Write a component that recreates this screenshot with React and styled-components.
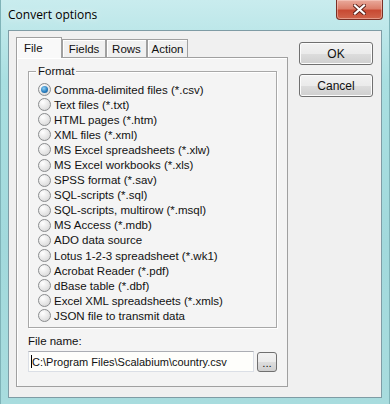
import React from 'react';
import styled, { createGlobalStyle } from 'styled-components';

const GlobalStyle = createGlobalStyle`
  html, body {
    margin: 0;
    padding: 0;
    background: #a3dadc;
  }
  body {
    font-family: "Liberation Sans", Arial, sans-serif;
    font-size: 11.5px;
    color: #111;
  }
  * {
    box-sizing: border-box;
  }
`;

const Window = styled.div`
  width: 390px;
  height: 404px;
  display: flex;
  flex-direction: column;
  padding: 0 8px 6px 8px;
  background: linear-gradient(180deg, #c9ecee 0%, #a9dfe1 20%, #a2d9dc 60%, #a8dcde 100%);
  box-shadow: inset 1px 0 0 #7fb3b8, inset -1px 0 0 #7fb3b8;
`;

const TitleBar = styled.div`
  height: 30px;
  display: flex;
  justify-content: space-between;
  align-items: flex-start;
`;

const Title = styled.span`
  font-family: "Open Sans", "Noto Sans", sans-serif;
  font-size: 12px;
  line-height: 16px;
  padding-top: 7px;
  color: #000;
  text-shadow: 0 0 6px rgba(255, 255, 255, 0.9);
`;

const CloseButton = styled.div`
  width: 47px;
  height: 20px;
  margin-right: -1px;
  display: flex;
  align-items: center;
  justify-content: center;
  border: 1px solid #7a3025;
  border-top: none;
  border-radius: 0 0 4px 4px;
  background: linear-gradient(180deg, #e9aa9c 0%, #dc7f6b 45%, #c84a33 55%, #d0654c 100%);
  box-shadow: inset 0 0 0 1px rgba(255, 220, 210, 0.45);
`;

const Client = styled.div`
  flex: 1;
  display: flex;
  align-items: flex-start;
  gap: 11px;
  padding: 6px 0 0 7px;
  background: #f0f0f0;
  border: 1px solid #7f9ca5;
`;

const TabControl = styled.div`
  width: 272px;
  display: flex;
  flex-direction: column;
`;

const TabStrip = styled.div`
  height: 20px;
  display: flex;
  align-items: flex-end;
  position: relative;
  z-index: 1;
`;

const Tab = styled.div`
  width: ${p => p.$w}px;
  height: ${p => (p.$active ? 21 : 18)}px;
  margin-bottom: ${p => (p.$active ? -1 : 0)}px;
  padding: ${p => (p.$active ? '3px 0 0 7px' : '2px 0 0 0')};
  text-align: ${p => (p.$active ? 'left' : 'center')};
  line-height: 14px;
  border: 1px solid #a0a0a0;
  border-bottom: none;
  background: ${p => (p.$active ? '#f9f9f9' : '#f0f0f0')};
  box-shadow: inset 1px 1px 0 #fff;
`;

const Panel = styled.div`
  height: 330px;
  padding: 6px 10px 0 11px;
  border: 1px solid #a0a0a0;
  background: #f4f4f4;
  box-shadow: inset 1px 1px 0 #fff;
`;

const Group = styled.fieldset`
  margin: 0;
  height: 264px;
  padding: 4px 8px 0 9px;
  border: 1px solid #a8a8a8;
  border-radius: 0;
  box-shadow: inset 1px 1px 0 #fff, 1px 1px 0 #fff;
`;

const Legend = styled.legend`
  margin-left: -2px;
  padding: 0 2px;
  line-height: 14px;
  background: #f4f4f4;
`;

const Option = styled.label`
  display: flex;
  align-items: center;
  gap: 3px;
  height: 15.1px;
  white-space: nowrap;
`;

const Radio = styled.span`
  width: 13px;
  height: 13px;
  border-radius: 50%;
  border: 1px solid #8a8c8e;
  background: radial-gradient(circle at 35% 30%, #ffffff 0%, #e6e6e6 55%, #cfcfcf 100%);
  display: flex;
  align-items: center;
  justify-content: center;
  flex-shrink: 0;

  &::after {
    content: '';
    display: ${p => (p.$checked ? 'block' : 'none')};
    width: 7px;
    height: 7px;
    border-radius: 50%;
    background: radial-gradient(circle at 40% 35%, #8fd1f5 0%, #2a7fc0 55%, #0f4f8a 100%);
  }
`;

const FileLabel = styled.div`
  margin-top: 6px;
  line-height: 14px;
`;

const FileRow = styled.div`
  margin-top: 3px;
  display: flex;
  align-items: flex-start;
  gap: 3px;
`;

const TextBox = styled.div`
  width: 226px;
  height: 21px;
  display: flex;
  align-items: center;
  padding-left: 2px;
  font-size: 11px;
  background: #fefefb;
  border: 1px solid #dbdfe6;
  border-top-color: #abadb3;
  white-space: nowrap;
`;

const Caret = styled.span`
  width: 1px;
  height: 13px;
  background: #000;
`;

const Browse = styled.div`
  width: 20px;
  height: 20px;
  margin-top: 1px;
  display: flex;
  align-items: flex-end;
  justify-content: center;
  padding-bottom: 3px;
  line-height: 10px;
  border: 1px solid #707070;
  border-radius: 3px;
  background: linear-gradient(180deg, #f2f2f2 0%, #ebebeb 50%, #dddddd 51%, #cfcfcf 100%);
`;

const Buttons = styled.div`
  display: flex;
  flex-direction: column;
  gap: 9px;
  padding-top: 5px;
`;

const Button = styled.div`
  width: 74px;
  height: 23px;
  display: flex;
  align-items: center;
  justify-content: center;
  font-size: 12px;
  border: 1px solid #707070;
  border-radius: 3px;
  background: linear-gradient(180deg, #f2f2f2 0%, #ebebeb 50%, #dddddd 51%, #cfcfcf 100%);
  box-shadow: inset 0 0 0 1px #fcfcfc;
`;

const formats = [
  'Comma-delimited files (*.csv)',
  'Text files (*.txt)',
  'HTML pages (*.htm)',
  'XML files (*.xml)',
  'MS Excel spreadsheets (*.xlw)',
  'MS Excel workbooks (*.xls)',
  'SPSS format (*.sav)',
  'SQL-scripts (*.sql)',
  'SQL-scripts, multirow (*.msql)',
  'MS Access (*.mdb)',
  'ADO data source',
  'Lotus 1-2-3 spreadsheet (*.wk1)',
  'Acrobat Reader (*.pdf)',
  'dBase table (*.dbf)',
  'Excel XML spreadsheets (*.xmls)',
  'JSON file to transmit data',
];

const tabs = [
  { name: 'File', w: 46 },
  { name: 'Fields', w: 44 },
  { name: 'Rows', w: 41 },
  { name: 'Action', w: 41 },
];

export default function App() {
  return (
    <>
      <GlobalStyle />
      <Window>
        <TitleBar>
          <Title>Convert options</Title>
          <CloseButton>
            <svg width="13" height="11" viewBox="0 0 13 11">
              <path d="M2 1.5 L11 9.5 M11 1.5 L2 9.5" stroke="#5a2018" strokeWidth="4" strokeLinecap="square" />
              <path d="M2 1.5 L11 9.5 M11 1.5 L2 9.5" stroke="#fff" strokeWidth="2.2" strokeLinecap="square" />
            </svg>
          </CloseButton>
        </TitleBar>
        <Client>
          <TabControl>
            <TabStrip>
              {tabs.map((t, i) => (
                <Tab key={t.name} $w={t.w} $active={i === 0}>{t.name}</Tab>
              ))}
            </TabStrip>
            <Panel>
              <Group>
                <Legend>Format</Legend>
                {formats.map((f, i) => (
                  <Option key={f}>
                    <Radio $checked={i === 0} />
                    {f}
                  </Option>
                ))}
              </Group>
              <FileLabel>File name:</FileLabel>
              <FileRow>
                <TextBox>
                  <Caret />
                  C:\Program Files\Scalabium\country.csv
                </TextBox>
                <Browse>...</Browse>
              </FileRow>
            </Panel>
          </TabControl>
          <Buttons>
            <Button>OK</Button>
            <Button>Cancel</Button>
          </Buttons>
        </Client>
      </Window>
    </>
  );
}
